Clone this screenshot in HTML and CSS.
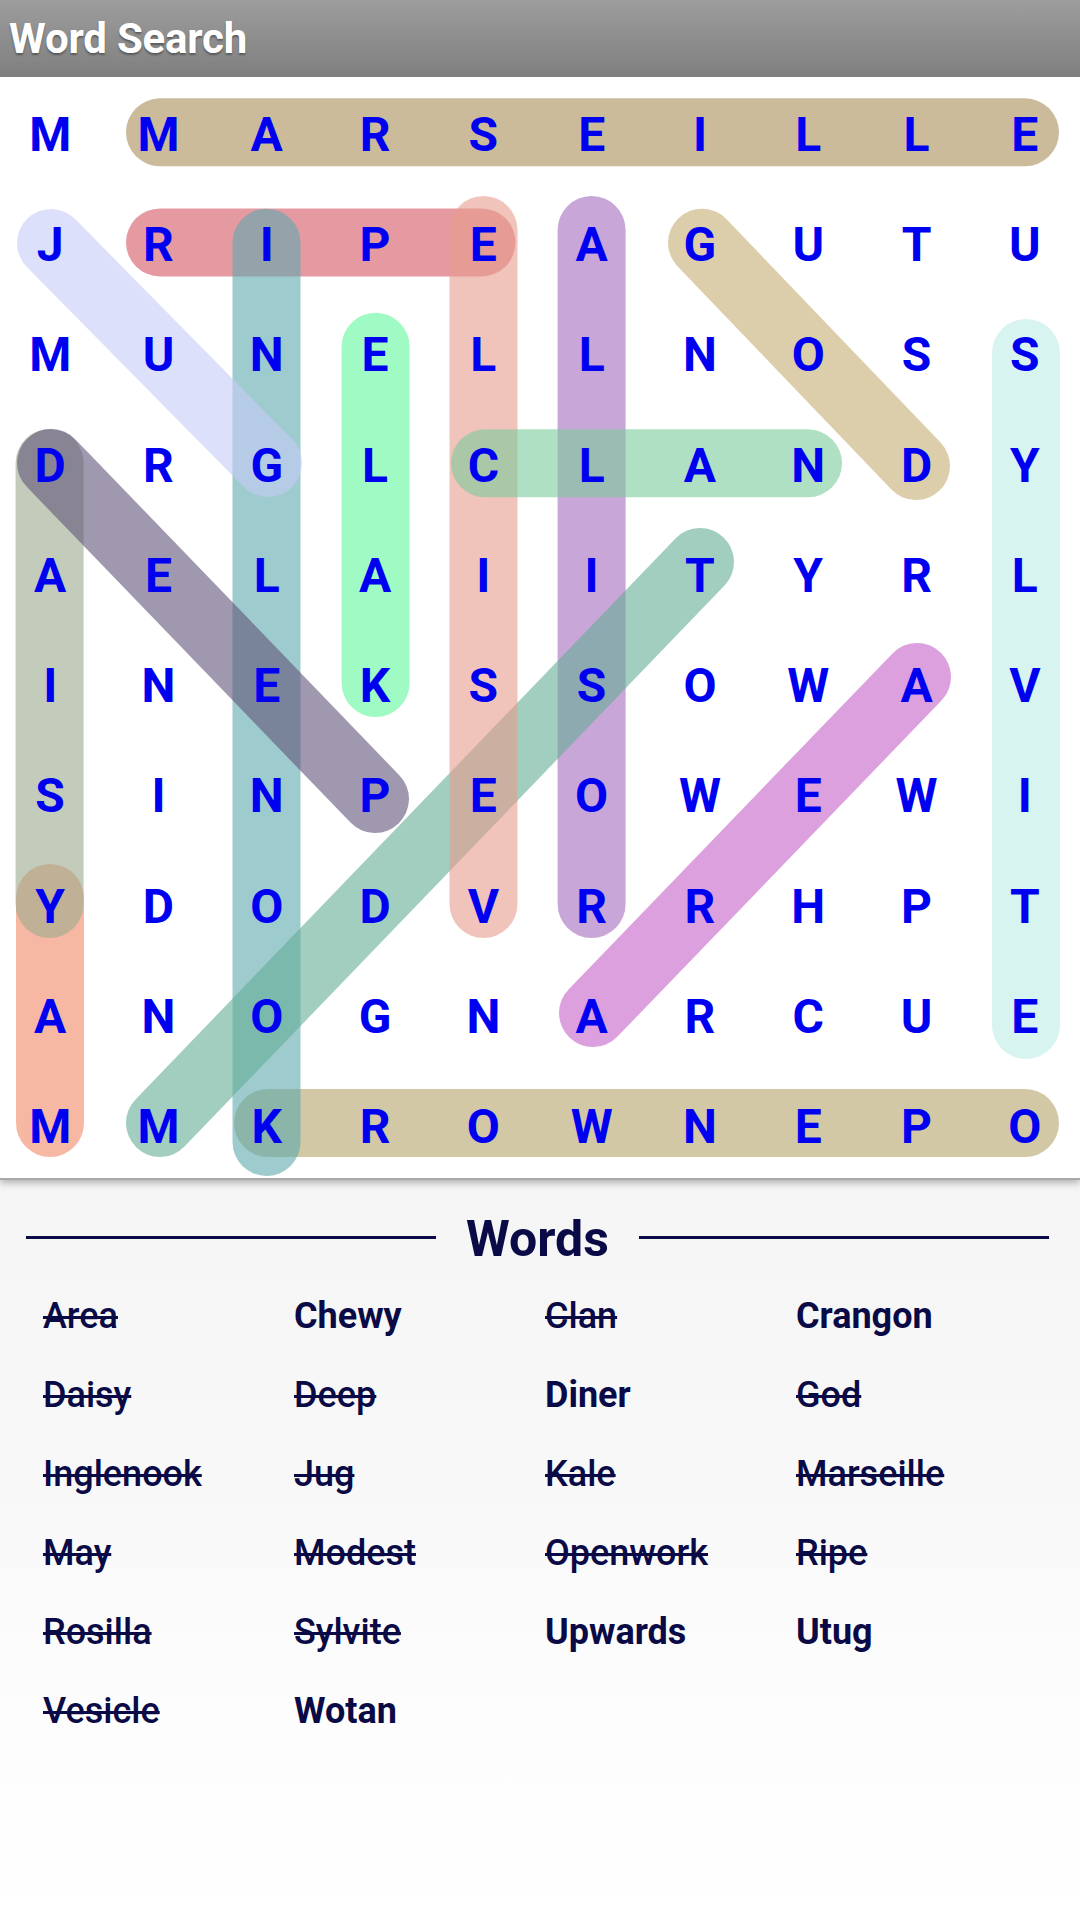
FILE: index.html
```html
<!DOCTYPE html>
<html lang="en">
<head>
<meta charset="utf-8">
<title>Word Search</title>
<link rel="stylesheet" href="styles.css">
</head>
<body>
<header class="appbar"><h1 class="title">Word Search</h1></header>

<section class="board">
  <svg class="marks" viewBox="0 77 1080 1101" width="1080" height="1101">
    <line class="mk marseille" x1="160" y1="132.3" x2="1025" y2="132.3"/>
    <line class="mk ripe" x1="160" y1="242.4" x2="481.5" y2="242.4"/>
    <line class="mk openwork" x1="268" y1="1123" x2="1025" y2="1123"/>
    <line class="mk inglenook" x1="266.5" y1="242.7" x2="266.5" y2="1142"/>
    <line class="mk jug" x1="51" y1="243" x2="268" y2="463"/>
    <line class="mk rosilla" x1="591.6" y1="230" x2="591.6" y2="904"/>
    <line class="mk modest" x1="700" y1="562" x2="160" y2="1123"/>
    <line class="mk vesicle" x1="483.5" y1="230" x2="483.5" y2="904"/>
    <line class="mk clan" x1="485" y1="463.3" x2="808" y2="463.3"/>
    <line class="mk may" x1="50" y1="898" x2="50" y2="1123"/>
    <line class="mk daisy" x1="49.6" y1="463" x2="49.6" y2="904"/>
    <line class="mk deep" x1="51" y1="463" x2="375" y2="799"/>
    <line class="mk kale" x1="375.6" y1="346.7" x2="375.6" y2="683"/>
    <line class="mk god" x1="702" y1="242.7" x2="916" y2="466"/>
    <line class="mk sylvite" x1="1026" y1="353" x2="1026" y2="1025"/>
    <line class="mk area" x1="917" y1="677" x2="593" y2="1013"/>
  </svg>
  <div class="letters">
    <span>M</span><span>M</span><span>A</span><span>R</span><span>S</span><span>E</span><span>I</span><span>L</span><span>L</span><span>E</span>
    <span>J</span><span>R</span><span>I</span><span>P</span><span>E</span><span>A</span><span>G</span><span>U</span><span>T</span><span>U</span>
    <span>M</span><span>U</span><span>N</span><span>E</span><span>L</span><span>L</span><span>N</span><span>O</span><span>S</span><span>S</span>
    <span>D</span><span>R</span><span>G</span><span>L</span><span>C</span><span>L</span><span>A</span><span>N</span><span>D</span><span>Y</span>
    <span>A</span><span>E</span><span>L</span><span>A</span><span>I</span><span>I</span><span>T</span><span>Y</span><span>R</span><span>L</span>
    <span>I</span><span>N</span><span>E</span><span>K</span><span>S</span><span>S</span><span>O</span><span>W</span><span>A</span><span>V</span>
    <span>S</span><span>I</span><span>N</span><span>P</span><span>E</span><span>O</span><span>W</span><span>E</span><span>W</span><span>I</span>
    <span>Y</span><span>D</span><span>O</span><span>D</span><span>V</span><span>R</span><span>R</span><span>H</span><span>P</span><span>T</span>
    <span>A</span><span>N</span><span>O</span><span>G</span><span>N</span><span>A</span><span>R</span><span>C</span><span>U</span><span>E</span>
    <span>M</span><span>M</span><span>K</span><span>R</span><span>O</span><span>W</span><span>N</span><span>E</span><span>P</span><span>O</span>
  </div>
</section>

<section class="wordlist">
  <div class="words-head">
    <span class="rule"></span>
    <h2 class="words-title">Words</h2>
    <span class="rule"></span>
  </div>
  <ul class="words">
    <li class="found">Area</li>
    <li>Chewy</li>
    <li class="found">Clan</li>
    <li>Crangon</li>
    <li class="found">Daisy</li>
    <li class="found">Deep</li>
    <li>Diner</li>
    <li class="found">God</li>
    <li class="found">Inglenook</li>
    <li class="found">Jug</li>
    <li class="found">Kale</li>
    <li class="found">Marseille</li>
    <li class="found">May</li>
    <li class="found">Modest</li>
    <li class="found">Openwork</li>
    <li class="found">Ripe</li>
    <li class="found">Rosilla</li>
    <li class="found">Sylvite</li>
    <li>Upwards</li>
    <li>Utug</li>
    <li class="found">Vesicle</li>
    <li>Wotan</li>
  </ul>
</section>
</body>
</html>
```

FILE: styles.css
```css
html, body {
  margin: 0;
  padding: 0;
}
body {
  width: 1080px;
  height: 1920px;
  overflow: hidden;
  font-family: Roboto, "Liberation Sans", Arial, sans-serif;
  background: #ffffff;
}

.appbar {
  height: 77px;
  background: linear-gradient(#9d9d9d, #7f7f7f);
  position: relative;
  z-index: 3;
}
.title {
  margin: 0;
  padding-left: 9px;
  font-size: 42px;
  line-height: 77px;
  font-weight: 700;
  color: #ffffff;
  text-shadow: 0 2px 2px rgba(0, 0, 0, 0.35);
  letter-spacing: -0.2px;
}

.board {
  position: relative;
  height: 1101px;
  background: #ffffff;
  overflow: hidden;
  border-bottom: 2px solid #a9a9a9;
  box-shadow: 0 3px 7px rgba(0, 0, 0, 0.28);
  z-index: 2;
}
.marks {
  position: absolute;
  left: 0;
  top: 0;
}
.mk {
  stroke-width: 68;
  stroke-linecap: round;
  stroke-opacity: 0.6;
  fill: none;
}
.marseille { stroke: #a88e58; }
.ripe { stroke: #d45764; }
.jug { stroke: #c6cbf7; }
.inglenook { stroke: #5da8ad; }
.kale { stroke: #61f79b; }
.vesicle { stroke: #e69d8c; }
.rosilla { stroke: #a36bbc; }
.god { stroke: #c5ad71; }
.clan { stroke: #7bcb9b; }
.sylvite { stroke: #beede6; }
.deep { stroke: #615378; }
.daisy { stroke: #9baa8e; }
.may { stroke: #f08966; }
.modest { stroke: #64ad96; }
.area { stroke: #c561c8; }
.openwork { stroke: #b4a369; }

.letters {
  position: relative;
  display: grid;
  grid-template-columns: repeat(10, 108.3px);
  grid-template-rows: repeat(10, 110.3px);
  margin-left: -4px;
  padding-top: 2px;
}
.letters span {
  display: flex;
  align-items: center;
  justify-content: center;
  font-size: 48px;
  font-weight: 700;
  color: #0000f0;
}

.wordlist {
  position: relative;
  z-index: 1;
  height: 740px;
  padding-top: 30px;
  box-sizing: border-box;
  background: linear-gradient(#f5f5f5, #f8f8f8 40%, #fdfdfd 75%, #ffffff);
}
.words-head {
  display: flex;
  align-items: center;
  padding: 0 31px 0 26px;
}
.rule {
  flex: 1;
  height: 3px;
  margin-top: -4px;
  background: #0a0a46;
}
.words-title {
  margin: 0 30px;
  font-size: 50px;
  line-height: 58px;
  font-weight: 700;
  color: #0a0a46;
}
.words {
  list-style: none;
  margin: 9px 0 0 0;
  padding: 0 0 0 43px;
  display: grid;
  grid-template-columns: repeat(4, 251px);
}
.words li {
  font-size: 36px;
  line-height: 79px;
  font-weight: 700;
  color: #0a0a46;
  white-space: nowrap;
}
.words li.found {
  font-weight: 500;
  text-decoration: line-through;
  text-decoration-thickness: 2.5px;
}
```
